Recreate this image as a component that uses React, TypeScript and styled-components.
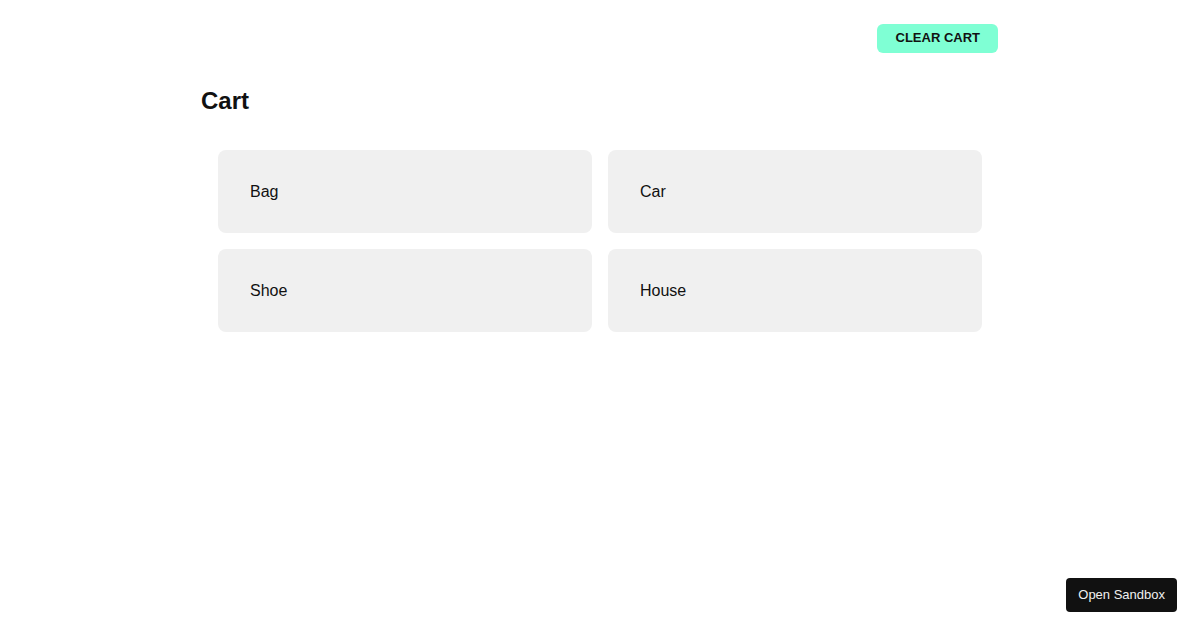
import React from 'react'
import styled, { createGlobalStyle } from 'styled-components'

const GlobalStyle = createGlobalStyle`
  html, body {
    margin: 0;
    padding: 0;
    background: #ffffff;
    font-family: "Liberation Sans", Arial, sans-serif;
    color: #111111;
  }
`

const App = () => {
  const items = ['Bag', 'Car', 'Shoe', 'House']
  return (
    <>
      <GlobalStyle />
      <Page>
        <TopBar>
          <ClearButton>Clear Cart</ClearButton>
        </TopBar>
        <Title>Cart</Title>
        <Grid>
          {items.map((name) => (
            <Card key={name}>{name}</Card>
          ))}
        </Grid>
      </Page>
      <SandboxButton>Open Sandbox</SandboxButton>
    </>
  )
}

const Page = styled.div`
  max-width: 800px;
  margin: 0 auto;
  padding-top: 24px;
`

const TopBar = styled.div`
  display: flex;
  justify-content: flex-end;
  padding-right: 2px;
`

const ClearButton = styled.button`
  background: #7fffd4;
  border: none;
  border-radius: 6px;
  padding: 6px 18px 8px 19px;
  font-family: "Liberation Sans", Arial, sans-serif;
  font-weight: 700;
  font-size: 13px;
  line-height: 15px;
  text-transform: uppercase;
  color: #111111;
  cursor: pointer;
`

const Title = styled.h1`
  margin: 34px 0 0 0;
  padding-left: 1px;
  font-size: 24px;
  font-weight: 700;
  line-height: 28px;
  color: #111111;
`

const Grid = styled.div`
  display: grid;
  grid-template-columns: 1fr 1fr;
  gap: 16px;
  margin: 35px 18px 0 18px;
`

const Card = styled.div`
  background: #f0f0f0;
  border-radius: 8px;
  padding: 32px;
  font-size: 16px;
  line-height: 19px;
  color: #111111;
`

const SandboxButton = styled.button`
  position: fixed;
  right: 23px;
  bottom: 18px;
  background: #111111;
  color: #f0f0f0;
  border: none;
  border-radius: 4px;
  padding: 9px 12px 10px 12px;
  font-family: "Liberation Sans", Arial, sans-serif;
  font-size: 13px;
  line-height: 15px;
  cursor: pointer;
`

export default App
